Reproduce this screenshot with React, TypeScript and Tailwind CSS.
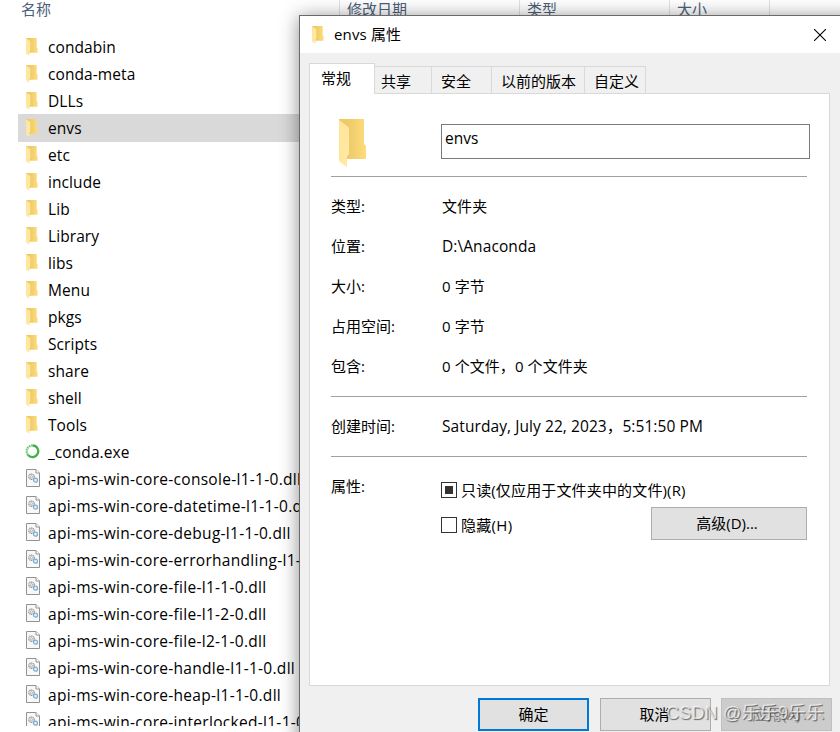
import React from 'react';

const folders = [
  'condabin', 'conda-meta', 'DLLs', 'envs', 'etc', 'include', 'Lib', 'Library',
  'libs', 'Menu', 'pkgs', 'Scripts', 'share', 'shell', 'Tools',
];

const dlls = [
  'console-l1-1-0', 'datetime-l1-1-0', 'debug-l1-1-0', 'errorhandling-l1-1-0', 'file-l1-1-0',
  'file-l1-2-0', 'file-l2-1-0', 'handle-l1-1-0', 'heap-l1-1-0', 'interlocked-l1-1-0',
];

const info = [
  { label: '类型:', value: '文件夹' },
  { label: '位置:', value: 'D:\\Anaconda' },
  { label: '大小:', value: '0 字节' },
  { label: '占用空间:', value: '0 字节' },
  { label: '包含:', value: '0 个文件，0 个文件夹' },
];

function FolderIcon({ className }: { className: string }) {
  return (
    <svg viewBox="0 0 28 49" preserveAspectRatio="none" className={className}>
      <defs>
        <linearGradient id="folderBack" x1="0" y1="0" x2="1" y2="0">
          <stop offset="0.3" stopColor="#edc967" />
          <stop offset="1" stopColor="#fedc7c" />
        </linearGradient>
        <linearGradient id="folderFront" x1="0" y1="0" x2="1" y2="1">
          <stop offset="0" stopColor="#ffe594" />
          <stop offset="1" stopColor="#ffe9a8" />
        </linearGradient>
      </defs>
      <path d="M0 0h25v25l2 2v13H5z" fill="url(#folderBack)" />
      <path d="M0 1l8 6q2 1 2 3v25l-2 2v11L1 43q-1-1-1-2z" fill="url(#folderFront)" />
    </svg>
  );
}

function CondaIcon() {
  return (
    <svg width="15" height="15" viewBox="0 0 15 15" fill="none" className="shrink-0 -ml-px">
      <path d="M7.5 1.5a5.8 5.8 0 1 1-4.6 9.4" stroke="#43b049" strokeWidth="2.3" />
      <path d="M2.9 10.9A5.8 5.8 0 0 1 7.5 1.5" stroke="#6cc471" strokeWidth="2.2" strokeDasharray="1.6 0.7" />
    </svg>
  );
}

function DllIcon() {
  return (
    <svg width="14" height="18" viewBox="0 0 14 18" fill="none" className="shrink-0 mb-0.5">
      <path d="M.5.5h9.5l3.5 3.5v13.5H.5z" fill="#f8f8f8" stroke="#929292" />
      <path d="M10 .5V4h3.5" fill="#fff" stroke="#929292" />
      <circle cx="5.5" cy="7.7" r="2.7" stroke="#909090" strokeWidth="1.2" strokeDasharray="1.2 .5" />
      <circle cx="5.5" cy="7.7" r="1.1" stroke="#999" strokeWidth=".7" />
      <circle cx="9.5" cy="11.2" r="2" stroke="#7baed3" strokeWidth="1.2" fill="#e2f1fb" />
    </svg>
  );
}

function FileRow({ icon, name, selected }: { icon: React.ReactNode; name: string; selected?: boolean }) {
  return (
    <div className={`ml-[18px] h-[27px] shrink-0 flex items-center pl-2 text-[15.5px] whitespace-nowrap ${selected ? 'bg-[#d9d9d9] shadow-[0_1px_0_#d9d9d9]' : ''}`}>
      <span className="w-[22px] flex">{icon}</span>
      <span className={`pt-[3px] ${name.endsWith('.dll') ? 'tracking-[0.29px]' : 'tracking-[0.08px]'}`}>{name}</span>
    </div>
  );
}

function InfoRow({ label, value }: { label: string; value: string }) {
  const latin = /[A-Z]/.test(value);
  return (
    <div className="h-10 flex items-center">
      <span className="w-[111px]">{label}</span>
      <span className={latin ? 'pt-0.5 text-[15.5px] tracking-[0.08px]' : 'tracking-[0.08px]'}>{value}</span>
    </div>
  );
}

function Explorer() {
  return (
    <div className="h-[726px] overflow-hidden flex flex-col">
      <div className="h-[33px] shrink-0 flex text-[15px] leading-[18px] text-[#4c607a]">
        <span className="w-[339px] pl-[21px]">名称</span>
        <span className="w-[180px] border-l border-[#e2e2e2] pl-[7px]">修改日期</span>
        <span className="w-[150px] border-l border-[#e2e2e2] pl-[7px]">类型</span>
        <span className="w-[100px] border-l border-[#e2e2e2] pl-[7px]">大小</span>
        <span className="border-l border-[#e2e2e2]" />
      </div>
      {folders.map((name) => (
        <FileRow key={name} name={name} selected={name === 'envs'} icon={<FolderIcon className="w-3 h-[18px]" />} />
      ))}
      <FileRow name="_conda.exe" icon={<CondaIcon />} />
      {dlls.map((name) => (
        <FileRow key={name} name={`api-ms-win-core-${name}.dll`} icon={<DllIcon />} />
      ))}
    </div>
  );
}

function Tabs() {
  return (
    <div className="flex items-end pl-[9px] h-10">
      <div className="w-[66px] h-[31px] -mb-px bg-white border border-b-0 border-[#d9d9d9] pl-[11px] leading-[29px] relative">常规</div>
      <div className="w-[57px] h-[27px] border-t border-r border-[#d9d9d9] pl-1.5 leading-[29px]">共享</div>
      <div className="w-[60px] h-[27px] border-t border-r border-[#d9d9d9] pl-[9px] leading-[29px]">安全</div>
      <div className="w-[93px] h-[27px] border-t border-r border-[#d9d9d9] pl-[9px] leading-[29px]">以前的版本</div>
      <div className="w-[61px] h-[27px] border-t border-r border-[#d9d9d9] pl-[9px] leading-[29px]">自定义</div>
    </div>
  );
}

function Properties() {
  return (
    <div className="absolute left-[299px] top-[15px] w-[560px] h-[740px] bg-[#f0f0f0] border border-[#6a6a6a] shadow-[0_2px_18px_rgba(0,0,0,0.45)] text-[15px]">
      <div className="h-[37px] bg-white flex items-center pl-3">
        <FolderIcon className="w-3 h-[18px]" />
        <span className="ml-2.5 w-[480px] tracking-[0.15px]">envs 属性</span>
        <svg width="12" height="12" viewBox="0 0 12 12" stroke="#000" strokeWidth="1.1">
          <path d="M0 0l12 12M12 0L0 12" />
        </svg>
      </div>

      <Tabs />

      <div className="ml-[9px] w-[521px] h-[593px] bg-white border border-[#d9d9d9] pl-[21px] pr-[19px]">
        <div className="h-[82px] flex items-start">
          <FolderIcon className="w-7 h-[49px] mt-[25px] ml-2" />
          <div className="ml-[74px] mt-[30px] w-[369px] h-[35px] border border-[#7a7a7a] pl-[3px] text-[15.5px] leading-[26px]">envs</div>
        </div>
        <div className="w-[476px] border-t border-[#a0a0a0] pt-[9px] h-[220px]">
          {info.map((row) => <InfoRow key={row.label} {...row} />)}
        </div>
        <div className="w-[476px] border-t border-[#a0a0a0] pt-[9px] h-[60px]">
          <InfoRow label="创建时间:" value="Saturday, July 22, 2023，5:51:50 PM" />
        </div>
        <div className="w-[476px] border-t border-[#a0a0a0] flex">
          <span className="w-[110px] pt-[18px]">属性:</span>
          <div className="flex-1 pt-[21px]">
            <div className="flex items-center h-[23px]">
              <span className="size-4 border border-[#333] flex items-center justify-center">
                <span className="size-2 bg-[#333]" />
              </span>
              <span className="ml-1 pt-0.5 tracking-[0.15px]">只读(仅应用于文件夹中的文件)(R)</span>
            </div>
            <div className="flex justify-between pt-1.5">
              <div className="flex items-center h-[35px]">
                <span className="size-4 border border-[#333]" />
                <span className="ml-1 pt-0.5 tracking-[0.3px]">隐藏(H)</span>
              </div>
              <button className="w-[156px] h-[33px] bg-[#e1e1e1] border border-[#adadad] pr-1">高级(D)...</button>
            </div>
          </div>
        </div>
      </div>

      <div className="flex mt-3 ml-[178px]">
        <button className="w-[111px] h-[33px] bg-[#e1e1e1] border-2 border-[#0078d7]">确定</button>
        <button className="ml-[11px] w-[111px] h-[33px] bg-[#e1e1e1] border border-[#adadad] pr-0.5">取消</button>
        <button className="ml-2.5 w-[111px] h-[33px] bg-[#cccccc] border border-[#bfbfbf] text-[#838383]">应用(A)</button>
      </div>
    </div>
  );
}

export default function App() {
  return (
    <div className="relative w-[840px] h-[732px] overflow-hidden bg-white text-black font-['Open_Sans','Noto_Sans_CJK_SC',sans-serif]">
      <Explorer />
      <Properties />
      <div className="absolute left-[666px] top-[700px] text-[18px] leading-[26px] tracking-[0.2px] whitespace-nowrap font-['Liberation_Sans','Noto_Sans_CJK_SC',sans-serif] text-white/70 [text-shadow:1px_1px_1px_rgba(0,0,0,0.55)]">
        CSDN @乐乐9乐乐
      </div>
    </div>
  );
}
